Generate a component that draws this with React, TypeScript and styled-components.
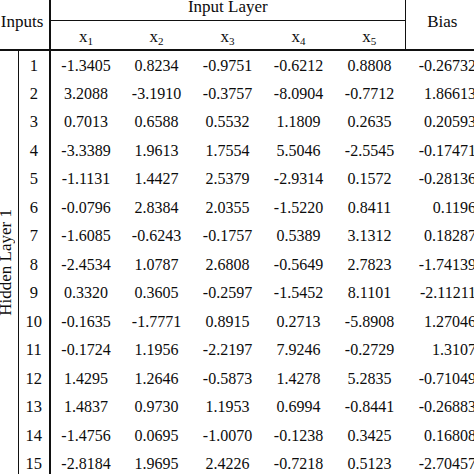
import React from 'react';
import styled, { createGlobalStyle } from 'styled-components';

const GlobalStyle = createGlobalStyle`
  html, body {
    margin: 0;
    padding: 0;
    background: #fff;
  }
  body {
    overflow: hidden;
  }
`;

type Row = [number, string, string, string, string, string, string];

const rows: Row[] = [
  [1, '-1.3405', '0.8234', '-0.9751', '-0.6212', '0.8808', '-0.26732'],
  [2, '3.2088', '-3.1910', '-0.3757', '-8.0904', '-0.7712', '1.86613'],
  [3, '0.7013', '0.6588', '0.5532', '1.1809', '0.2635', '0.20593'],
  [4, '-3.3389', '1.9613', '1.7554', '5.5046', '-2.5545', '-0.17471'],
  [5, '-1.1131', '1.4427', '2.5379', '-2.9314', '0.1572', '-0.28136'],
  [6, '-0.0796', '2.8384', '2.0355', '-1.5220', '0.8411', '0.1196'],
  [7, '-1.6085', '-0.6243', '-0.1757', '0.5389', '3.1312', '0.18287'],
  [8, '-2.4534', '1.0787', '2.6808', '-0.5649', '2.7823', '-1.74139'],
  [9, '0.3320', '0.3605', '-0.2597', '-1.5452', '8.1101', '-2.11211'],
  [10, '-0.1635', '-1.7771', '0.8915', '0.2713', '-5.8908', '1.27046'],
  [11, '-0.1724', '1.1956', '-2.2197', '7.9246', '-0.2729', '1.3107'],
  [12, '1.4295', '1.2646', '-0.5873', '1.4278', '5.2835', '-0.71049'],
  [13, '1.4837', '0.9730', '1.1953', '0.6994', '-0.8441', '-0.26883'],
  [14, '-1.4756', '0.0695', '-1.0070', '-0.1238', '0.3425', '0.16808'],
  [15, '-2.8184', '1.9695', '2.4226', '-0.7218', '0.5123', '-2.70457'],
];

const inputs = [1, 2, 3, 4, 5];

export default function App() {
  return (
    <Sheet>
      <GlobalStyle />
      <Table>
        <colgroup>
          <col style={{ width: 23 }} />
          <col style={{ width: 32 }} />
          {inputs.map((i) => (
            <col key={i} style={{ width: 71 }} />
          ))}
          <col style={{ width: 74 }} />
        </colgroup>
        <thead>
          <HeadRow $h={26.5}>
            <HeadCell colSpan={2} rowSpan={2} $right $bottom>
              Inputs
            </HeadCell>
            <HeadCell colSpan={5} $under>
              Input Layer
            </HeadCell>
            <HeadCell rowSpan={2} $left $bottom>
              Bias
            </HeadCell>
          </HeadRow>
          <HeadRow $h={29.5}>
            {inputs.map((i) => (
              <SubHead key={i}>
                x<Sub>{i}</Sub>
              </SubHead>
            ))}
          </HeadRow>
        </thead>
        <tbody>
          {rows.map((r, idx) => (
            <BodyRow key={r[0]}>
              {idx === 0 && (
                <LabelCell rowSpan={rows.length}>
                  <Vertical>Hidden Layer 1</Vertical>
                </LabelCell>
              )}
              <NumCell>{r[0]}</NumCell>
              {r.slice(1, 6).map((v, j) => (
                <Cell key={j}>{v}</Cell>
              ))}
              <BiasCell>{r[6]}</BiasCell>
            </BodyRow>
          ))}
        </tbody>
      </Table>
    </Sheet>
  );
}

const Sheet = styled.div`
  width: 474px;
  height: 474px;
  overflow: hidden;
  background: #fff;
`;

const Table = styled.table`
  border-collapse: collapse;
  table-layout: fixed;
  width: 484px;
  margin: -6px 0 0 -5px;
  font-family: 'Liberation Serif', 'Times New Roman', serif;
  color: #0c0c0c;
`;

const HeadRow = styled.tr<{ $h: number }>`
  height: ${(p) => p.$h}px;
`;

const HeadCell = styled.th<{ $right?: boolean; $left?: boolean; $bottom?: boolean; $under?: boolean }>`
  font-weight: normal;
  font-size: 17px;
  padding: 0;
  text-align: center;
  vertical-align: middle;
  white-space: nowrap;
  border-right: ${(p) => (p.$right ? '2px solid #111' : 'none')};
  border-left: ${(p) => (p.$left ? '1.5px solid #111' : 'none')};
  border-bottom: ${(p) =>
    p.$bottom ? '2px solid #111' : p.$under ? '1.5px solid #111' : 'none'};
`;

const SubHead = styled.th`
  font-weight: normal;
  font-size: 17px;
  padding: 3px 0 0;
  text-align: center;
  vertical-align: middle;
  border-bottom: 2px solid #111;
`;

const Sub = styled.sub`
  font-size: 11px;
  vertical-align: -3px;
  line-height: 0;
`;

const BodyRow = styled.tr`
  height: 28.5px;
`;

const LabelCell = styled.td`
  padding: 0;
  text-align: center;
  vertical-align: middle;
  border-right: 1.5px solid #111;
`;

const Vertical = styled.span`
  display: inline-block;
  writing-mode: vertical-rl;
  transform: rotate(180deg);
  font-size: 17px;
  white-space: nowrap;
`;

const NumCell = styled.td`
  font-size: 16.5px;
  padding: 2px 0 0;
  text-align: center;
  vertical-align: middle;
  border-right: 2px solid #111;
`;

const Cell = styled.td`
  font-size: 16px;
  padding: 2px 0 0;
  text-align: center;
  vertical-align: middle;
  white-space: nowrap;
`;

const BiasCell = styled(Cell)`
  text-align: right;
  padding-right: 3px;
`;
